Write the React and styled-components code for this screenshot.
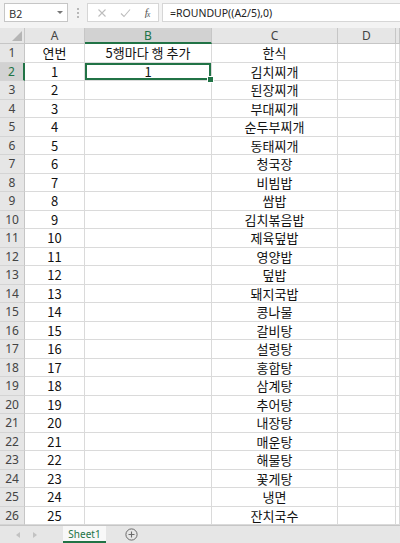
import React from 'react';
import styled, { createGlobalStyle } from 'styled-components';

const GlobalStyle = createGlobalStyle`
  html, body {
    margin: 0;
    padding: 0;
    background: #ffffff;
  }
  body {
    font-family: "Noto Sans CJK KR", "Noto Sans", sans-serif;
  }
`;

const Window = styled.div`
  width: 400px;
  height: 543px;
  display: flex;
  flex-direction: column;
  overflow: hidden;
  background: #f3f3f3;
`;

const FormulaBar = styled.div`
  height: 28px;
  flex: none;
  display: flex;
  align-items: flex-start;
  padding: 3px 0 0 4px;
  box-sizing: border-box;
  background: #f3f3f3;
`;

const NameBox = styled.div`
  width: 64px;
  height: 19px;
  box-sizing: border-box;
  border: 1px solid #c6c6c6;
  background: #ffffff;
  display: flex;
  align-items: center;
  justify-content: space-between;
  padding: 0 4px 0 4px;
  font-size: 11px;
  color: #333;
`;

const Caret = styled.span`
  width: 0;
  height: 0;
  border-left: 3px solid transparent;
  border-right: 3px solid transparent;
  border-top: 3px solid #777;
`;

const Grip = styled.div`
  width: 19px;
  height: 19px;
  display: flex;
  flex-direction: column;
  align-items: center;
  justify-content: center;
  gap: 2px;

  span {
    width: 2px;
    height: 2px;
    background: #b8b8b8;
  }
`;

const ButtonGroup = styled.div`
  width: 72px;
  height: 19px;
  box-sizing: border-box;
  border: 1px solid #d6d6d6;
  background: #ffffff;
  display: flex;
  align-items: center;
  justify-content: space-around;
  padding: 0 2px;
`;

const Fx = styled.span`
  font-family: "Liberation Serif", serif;
  font-style: italic;
  font-size: 11px;
  color: #555;
  letter-spacing: -1px;

  sub {
    font-size: 8px;
    vertical-align: -1px;
  }
`;

const FormulaInput = styled.div`
  flex: 1;
  height: 19px;
  margin-left: 3px;
  box-sizing: border-box;
  border: 1px solid #d6d6d6;
  border-right: none;
  background: #ffffff;
  display: flex;
  align-items: center;
  padding-left: 7px;
  font-family: "Noto Sans", sans-serif;
  font-size: 10.5px;
  color: #222;
`;

const SheetArea = styled.div`
  flex: 1;
  overflow: hidden;
  background: #ffffff;
`;

const Grid = styled.div`
  display: grid;
  grid-template-columns: 25px 60px 127px 126px 58px 1fr;
  grid-template-rows: 16px;
  grid-auto-rows: 18.5px;
`;

const Corner = styled.div`
  position: relative;
  background: #e6e6e6;
  border-right: 1px solid #c6c6c6;
  border-bottom: 1px solid #c6c6c6;

  &::after {
    content: "";
    position: absolute;
    right: 2px;
    bottom: 2px;
    width: 0;
    height: 0;
    border-left: 10px solid transparent;
    border-bottom: 10px solid #b5b5b5;
  }
`;

const ColHeader = styled.div`
  box-sizing: border-box;
  background: ${(p) => (p.$active ? '#d2d2d2' : '#e6e6e6')};
  color: ${(p) => (p.$active ? '#217346' : '#444')};
  border-right: 1px solid #c6c6c6;
  border-bottom: ${(p) => (p.$active ? '2px solid #217346' : '1px solid #c6c6c6')};
  display: flex;
  align-items: center;
  justify-content: center;
  font-family: "Noto Sans", sans-serif;
  font-size: 12px;
`;

const RowHeader = styled.div`
  box-sizing: border-box;
  background: ${(p) => (p.$active ? '#d2d2d2' : '#e6e6e6')};
  color: ${(p) => (p.$active ? '#217346' : '#444')};
  border-right: ${(p) => (p.$active ? '2px solid #217346' : '1px solid #c6c6c6')};
  border-bottom: 1px solid #d4d4d4;
  display: flex;
  align-items: center;
  justify-content: center;
  font-family: "Noto Sans", sans-serif;
  font-size: 12px;
`;

const Cell = styled.div`
  position: relative;
  box-sizing: border-box;
  border-right: 1px solid #dadada;
  border-bottom: 1px solid #dadada;
  display: flex;
  align-items: center;
  justify-content: center;
  font-size: 13px;
  color: #111;
  white-space: nowrap;
  box-shadow: ${(p) => (p.$selected ? 'inset 0 0 0 2px #217346' : 'none')};
`;

const FillHandle = styled.span`
  position: absolute;
  right: -3px;
  bottom: -3px;
  width: 5px;
  height: 5px;
  background: #217346;
  border: 1px solid #ffffff;
  z-index: 2;
`;

const TabBar = styled.div`
  height: 18px;
  flex: none;
  display: flex;
  align-items: stretch;
  background: #e6e6e6;
  border-top: 1px solid #c6c6c6;
  box-sizing: border-box;
`;

const NavArrows = styled.div`
  width: 63px;
  display: flex;
  align-items: center;
  gap: 13px;
  padding-left: 16px;
  box-sizing: border-box;
`;

const SheetTab = styled.div`
  width: 43px;
  background: #f8f8f8;
  border-bottom: 2px solid #217346;
  box-sizing: border-box;
  display: flex;
  align-items: center;
  justify-content: center;
  font-family: "Noto Sans", sans-serif;
  font-size: 10px;
  color: #217346;
`;

const AddSheet = styled.div`
  width: 50px;
  display: flex;
  align-items: center;
  justify-content: center;
`;

const foods = [
  '한식', '김치찌개', '된장찌개', '부대찌개', '순두부찌개', '동태찌개', '청국장',
  '비빔밥', '쌈밥', '김치볶음밥', '제육덮밥', '영양밥', '덮밥', '돼지국밥', '콩나물',
  '갈비탕', '설렁탕', '홍합탕', '삼계탕', '추어탕', '내장탕', '매운탕', '해물탕',
  '꽃게탕', '냉면', '잔치국수', '',
];

const columns = ['A', 'B', 'C', 'D', ''];

const App = () => {
  return (
    <Window>
      <GlobalStyle />
      <FormulaBar>
        <NameBox>
          B2
          <Caret />
        </NameBox>
        <Grip>
          <span />
          <span />
          <span />
        </Grip>
        <ButtonGroup>
          <svg width="10" height="10" viewBox="0 0 10 10">
            <path d="M1.5 1.5 L8.5 8.5 M8.5 1.5 L1.5 8.5" stroke="#bdbdbd" strokeWidth="1.1" fill="none" />
          </svg>
          <svg width="11" height="10" viewBox="0 0 11 10">
            <path d="M1 5.5 L4 8.5 L10 1.5" stroke="#bdbdbd" strokeWidth="1.1" fill="none" />
          </svg>
          <Fx>f<sub>x</sub></Fx>
        </ButtonGroup>
        <FormulaInput>=ROUNDUP((A2/5),0)</FormulaInput>
      </FormulaBar>

      <SheetArea>
        <Grid>
          <Corner />
          {columns.map((c) => (
            <ColHeader key={c || 'e'} $active={c === 'B'}>{c}</ColHeader>
          ))}
          {foods.map((food, i) => {
            const row = i + 1;
            const a = row === 1 ? '연번' : row <= 26 ? row - 1 : '';
            const b = row === 1 ? '5행마다 행 추가' : row === 2 ? '1' : '';
            return (
              <React.Fragment key={row}>
                <RowHeader $active={row === 2}>{row}</RowHeader>
                <Cell>{a}</Cell>
                <Cell $selected={row === 2}>
                  {b}
                  {row === 2 && <FillHandle />}
                </Cell>
                <Cell>{food}</Cell>
                <Cell />
                <Cell />
              </React.Fragment>
            );
          })}
        </Grid>
      </SheetArea>

      <TabBar>
        <NavArrows>
          <svg width="4" height="6" viewBox="0 0 4 6">
            <path d="M4 0 L0 3 L4 6 Z" fill="#c2c2c2" />
          </svg>
          <svg width="4" height="6" viewBox="0 0 4 6">
            <path d="M0 0 L4 3 L0 6 Z" fill="#c2c2c2" />
          </svg>
        </NavArrows>
        <SheetTab>Sheet1</SheetTab>
        <AddSheet>
          <svg width="13" height="13" viewBox="0 0 13 13">
            <circle cx="6.5" cy="6.5" r="5.6" stroke="#6a6a6a" strokeWidth="1" fill="none" />
            <path d="M6.5 3.5 V9.5 M3.5 6.5 H9.5" stroke="#6a6a6a" strokeWidth="1.1" />
          </svg>
        </AddSheet>
      </TabBar>
    </Window>
  );
};

export default App;
